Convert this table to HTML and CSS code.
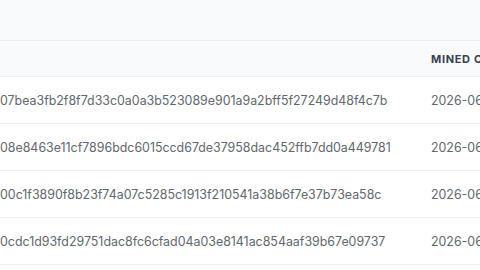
FILE: index.html
```html
<!DOCTYPE html>
<html>
<head>
    <link rel="stylesheet" href="styles.css">
</head>
<body>
    <div class="toolbar"></div>
    <table class="blocks">
        <thead>
            <tr>
                <th class="col-hash"></th>
                <th class="col-date">Mined on</th>
            </tr>
        </thead>
        <tbody>
            <tr>
                <td class="col-hash">07bea3fb2f8f7d33c0a0a3b523089e901a9a2bff5f27249d48f4c7b</td>
                <td class="col-date">2026-06-14 09:12</td>
            </tr>
            <tr>
                <td class="col-hash">08e8463e11cf7896bdc6015ccd67de37958dac452ffb7dd0a449781</td>
                <td class="col-date">2026-06-14 09:02</td>
            </tr>
            <tr>
                <td class="col-hash">00c1f3890f8b23f74a07c5285c1913f210541a38b6f7e37b73ea58c</td>
                <td class="col-date">2026-06-14 08:51</td>
            </tr>
            <tr>
                <td class="col-hash">0cdc1d93fd29751dac8fc6cfad04a03e8141ac854aaf39b67e09737</td>
                <td class="col-date">2026-06-14 08:40</td>
            </tr>
        </tbody>
    </table>
</body>
</html>
```

FILE: styles.css
```css
body {
    margin: 0;
    padding: 0;
    background: #ffffff;
    font-family: 'Inter', 'Noto Sans', sans-serif;
    overflow: hidden;
}

.toolbar {
    height: 40px;
    background: #f8fafc;
    border-bottom: 1px solid #eceef2;
}

.blocks {
    border-collapse: collapse;
    width: 700px;
    table-layout: fixed;
}

.blocks th {
    height: 35px;
    background: #f8fafc;
    color: #374151;
    font-size: 11px;
    font-weight: 700;
    text-transform: uppercase;
    letter-spacing: 0.06em;
    text-align: left;
    padding: 0 16px;
    border-bottom: 1px solid #eceef2;
}

.blocks td {
    height: 46px;
    color: #62666d;
    font-size: 12.4px;
    padding: 0 16px;
    border-bottom: 1px solid #eceef2;
    white-space: nowrap;
}

.blocks .col-hash {
    width: 399px;
    padding-left: 0;
}
```
